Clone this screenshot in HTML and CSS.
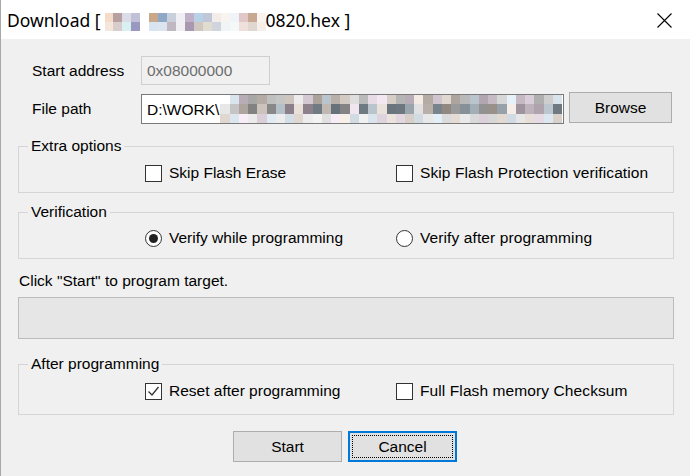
FILE: index.html
```html
<!DOCTYPE html>
<html lang="en">
<head>
  <meta charset="UTF-8" />
  <title>Download</title>
  <link rel="stylesheet" href="styles.css">
</head>
<body>
  <div class="window">
    <div class="titlebar">
      <div class="title">
        <span>Download [</span>
        <span class="mosaic title-blur" id="titleBlurA"></span>
        <span class="mosaic title-blur gap" id="titleBlurB"></span>
        <span>0820.hex ]</span>
      </div>
      <svg class="close" viewBox="0 0 15 15">
        <path d="M0.5 0.5 L14.5 14.5 M14.5 0.5 L0.5 14.5" stroke="#000" stroke-width="1.1" fill="none" />
      </svg>
    </div>

    <div class="content">
      <div class="field-row">
        <span class="field-label">Start address</span>
        <div class="textbox disabled">0x08000000</div>
      </div>

      <div class="field-row path-row">
        <span class="field-label">File path</span>
        <div class="textbox path">
          <span>D:\WORK\</span>
          <span class="mosaic path-blur" id="pathBlur"></span>
        </div>
        <button class="win-btn browse">Browse</button>
      </div>

      <fieldset class="group extra">
        <legend>Extra options</legend>
        <div class="options">
          <label class="check"><span class="box"></span>Skip Flash Erase</label>
          <label class="check"><span class="box"></span>Skip Flash Protection verification</label>
        </div>
      </fieldset>

      <fieldset class="group verify">
        <legend>Verification</legend>
        <div class="options">
          <label class="check"><span class="radio selected"></span>Verify while programming</label>
          <label class="check"><span class="radio"></span>Verify after programming</label>
        </div>
      </fieldset>

      <div class="status">Click "Start" to program target.</div>
      <div class="progress"></div>

      <fieldset class="group after">
        <legend>After programming</legend>
        <div class="options">
          <label class="check">
            <span class="box">
              <svg viewBox="0 0 15 15"><path d="M2.5 7.5 L6 11 L12.5 3" stroke="#333" stroke-width="1.3" fill="none" /></svg>
            </span>Reset after programming
          </label>
          <label class="check"><span class="box"></span>Full Flash memory Checksum</label>
        </div>
      </fieldset>

      <div class="actions">
        <button class="win-btn">Start</button>
        <button class="win-btn default">Cancel</button>
      </div>
    </div>
  </div>

  <script>
    // pixelated parts of the file name, as in the screenshot
    const titleA = [
      ["#f5dcc8", "#b8a0a0", "#dcdce8", "#c0c0d8"],
      ["#f5e6dc", "#d8cccc", "#d8f0f0", "#9898c0"]
    ];
    const titleB = [
      ["#c8a888", "#90a8c8", "#c8d0dc", "#f0f0f4", "#c0b0c8", "#b8d0e8", "#c0c8d8", "#f4ece8", "#f8f4f0", "#f0f4f8", "#e0c8c8", "#c8a890", "#fbf3ee"],
      ["#d8e4f0", "#dce4f0", "#c0b8c0", "#f0f0f4", "#a898b0", "#d0c8c0", "#e0dcd0", "#d0d4dc", "#f0f4f4", "#f4f8f8", "#f0e0dc", "#e0d8d0", "#f6efe9"]
    ];

    function rand(seed) {
      return function () {
        seed = (seed + 0x6D2B79F5) | 0;
        let t = Math.imul(seed ^ (seed >>> 15), 1 | seed);
        t = (t + Math.imul(t ^ (t >>> 7), 61 | t)) ^ t;
        return ((t ^ (t >>> 14)) >>> 0) / 4294967296;
      };
    }

    function pathRows() {
      const r = rand(820);
      const rows = [[], [], []];
      const ranges = [[150, 225], [95, 205], [205, 245]];
      const tints = [[0, 0, 0], [10, 0, -6], [-6, 4, 12], [8, -4, 6]];
      for (let c = 0; c < 37; c++) {
        const blank = c === 0 || r() < 0.12;
        for (let i = 0; i < 3; i++) {
          let g;
          if (blank) g = i === 2 ? 215 : 238 - Math.floor(r() * 20);
          else g = ranges[i][0] + Math.floor(r() * (ranges[i][1] - ranges[i][0]));
          const t = tints[Math.floor(r() * tints.length)];
          const ch = t.map(d => Math.max(0, Math.min(255, g + d)));
          rows[i].push(`rgb(${ch.join(",")})`);
        }
      }
      return rows;
    }

    function fillMosaic(id, rows) {
      const el = document.getElementById(id);
      el.style.gridTemplateColumns = `repeat(${rows[0].length}, 1fr)`;
      rows.forEach(row => {
        row.forEach(color => {
          const cell = document.createElement("span");
          cell.style.background = color;
          el.appendChild(cell);
        });
      });
    }

    fillMosaic("titleBlurA", titleA);
    fillMosaic("titleBlurB", titleB);
    fillMosaic("pathBlur", pathRows());
  </script>
</body>
</html>
```

FILE: styles.css
```css
body {
  margin: 0;
  background-color: #f0f0f0;
  color: #000;
  font-family: "Liberation Sans", Arial, sans-serif;
  font-size: 15.5px;
}

.window {
  width: 690px;
  height: 476px;
  box-sizing: border-box;
  border-left: 1px solid #a8a8a8;
  background: #f0f0f0;
  overflow: hidden;
}

/* title bar */

.titlebar {
  height: 39px;
  background: #fff;
  display: flex;
  align-items: center;
  justify-content: space-between;
  padding: 0 18px 0 6px;
}

.title {
  display: flex;
  align-items: center;
  font-family: "Noto Sans", sans-serif;
  font-size: 17.5px;
  white-space: pre;
}

.close {
  width: 15px;
  height: 15px;
  margin-top: 1px;
}

.mosaic {
  display: grid;
}

.title-blur {
  height: 18px;
  margin: 4px 0 0 4px;
  grid-auto-rows: 9px;
}

#titleBlurA {
  width: 35px;
}

#titleBlurB {
  width: 117px;
  margin-left: 9px;
}

/* form */

.content {
  padding: 17px 16px 0 17px;
}

.field-row {
  display: flex;
  align-items: center;
  padding-left: 14px;
}

.field-label {
  width: 109px;
}

.textbox {
  height: 29px;
  box-sizing: border-box;
  border: 1px solid #7a7a7a;
  background: #fff;
  padding-left: 5px;
  display: flex;
  align-items: center;
}

.textbox.disabled {
  width: 129px;
  border-color: #cfcfcf;
  background: #f0f0f0;
  color: #6d6d6d;
}

.path-row {
  align-items: flex-start;
  margin-top: 7px;
}

.path-row .field-label {
  line-height: 30px;
  margin-top: 2px;
}

.textbox.path {
  width: 423px;
  height: 30px;
  margin-top: 2px;
  padding-right: 1px;
  align-items: stretch;
}

.textbox.path span:first-child {
  align-self: center;
  margin-top: 1px;
}

.path-blur {
  flex: 1;
  grid-auto-rows: 1fr;
  margin-left: 1px;
}

.win-btn {
  height: 31px;
  width: 109px;
  box-sizing: border-box;
  border: 1px solid #adadad;
  background: #e1e1e1;
  font-family: inherit;
  font-size: 15.5px;
  color: #000;
  padding: 0;
}

.win-btn.browse {
  width: 103px;
  height: 31px;
  margin-left: 5px;
}

.win-btn.default {
  border: 2px solid #0078d7;
  outline: 1px dotted #000;
  outline-offset: -5px;
}

/* group boxes */

.group {
  margin: 13px 0 0;
  padding: 0 0 10px;
  border: 1px solid #d5d5d5;
  min-width: 0;
}

.group legend {
  margin-left: 9px;
  padding: 0 3px;
  line-height: 18px;
}

.group.verify {
  margin-top: 10px;
}

.group.verify .options {
  padding-top: 8px;
  padding-bottom: 1px;
}

.group.after {
  margin-top: 16px;
  padding-bottom: 14px;
}

.options {
  display: flex;
  padding: 9px 0 0 126px;
}

.check {
  display: flex;
  align-items: center;
  gap: 7px;
  height: 18px;
}

.check:first-child {
  width: 251px;
}

.check:last-child {
  letter-spacing: 0.1px;
}

.box {
  width: 17px;
  height: 17px;
  box-sizing: border-box;
  border: 1px solid #333;
  background: #fff;
  display: flex;
}

.box svg {
  width: 15px;
  height: 15px;
}

.radio {
  width: 17px;
  height: 17px;
  box-sizing: border-box;
  border: 1px solid #333;
  border-radius: 50%;
  background: #fff;
  display: flex;
  align-items: center;
  justify-content: center;
}

.radio.selected::after {
  content: "";
  width: 9px;
  height: 9px;
  border-radius: 50%;
  background: #222;
}

/* status + progress */

.status {
  margin-top: 13px;
  line-height: 18px;
  padding-left: 1px;
}

.progress {
  margin-top: 7px;
  height: 42px;
  box-sizing: border-box;
  border: 1px solid #bcbcbc;
  background: #e6e6e6;
}

.actions {
  display: flex;
  justify-content: center;
  gap: 6px;
  margin-top: 16px;
  padding-right: 2px;
}
```
